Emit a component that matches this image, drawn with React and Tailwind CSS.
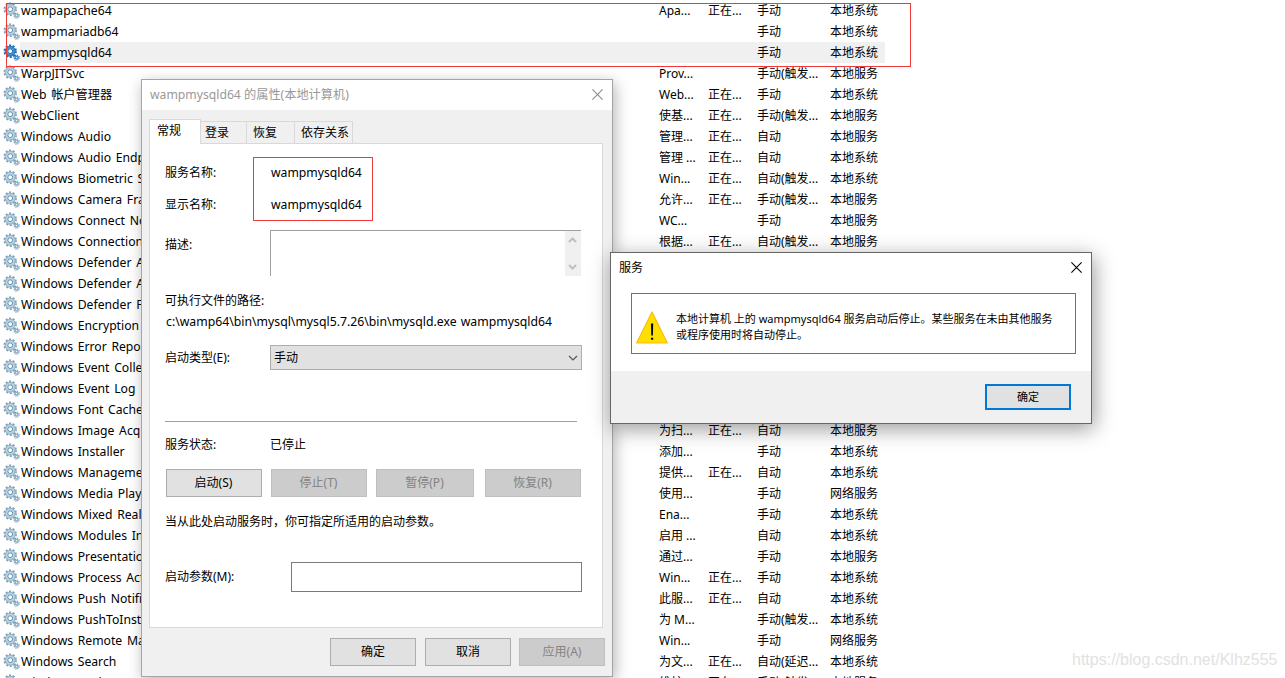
const SERVICES = [
    ["wampapache64", "Apa...", "正在...", "手动", "本地系统"],
    ["wampmariadb64", "", "", "手动", "本地系统"],
    ["wampmysqld64", "", "", "手动", "本地系统"],
    ["WarpJITSvc", "Prov...", "", "手动(触发...", "本地服务"],
    ["Web 帐户管理器", "Web...", "正在...", "手动", "本地系统"],
    ["WebClient", "使基...", "正在...", "手动(触发...", "本地服务"],
    ["Windows Audio", "管理...", "正在...", "自动", "本地服务"],
    ["Windows Audio Endp", "管理 ...", "正在...", "自动", "本地系统"],
    ["Windows Biometric S", "Win...", "正在...", "自动(触发...", "本地系统"],
    ["Windows Camera Fra", "允许...", "正在...", "手动(触发...", "本地服务"],
    ["Windows Connect No", "WC...", "", "手动", "本地服务"],
    ["Windows Connection", "根据...", "正在...", "自动(触发...", "本地服务"],
    ["Windows Defender A"],
    ["Windows Defender A"],
    ["Windows Defender F"],
    ["Windows Encryption"],
    ["Windows Error Repo"],
    ["Windows Event Colle"],
    ["Windows Event Log"],
    ["Windows Font Cache"],
    ["Windows Image Acq", "为扫...", "正在...", "自动", "本地服务"],
    ["Windows Installer", "添加...", "", "手动", "本地系统"],
    ["Windows Manageme", "提供...", "正在...", "自动", "本地系统"],
    ["Windows Media Play", "使用...", "", "手动", "网络服务"],
    ["Windows Mixed Real", "Ena...", "", "手动", "本地系统"],
    ["Windows Modules In", "启用 ...", "", "自动", "本地系统"],
    ["Windows Presentatio", "通过...", "", "手动", "本地服务"],
    ["Windows Process Act", "Win...", "正在...", "手动", "本地系统"],
    ["Windows Push Notifi", "此服...", "正在...", "自动", "本地系统"],
    ["Windows PushToInst", "为 M...", "", "手动(触发...", "本地系统"],
    ["Windows Remote Ma", "Win...", "", "手动", "网络服务"],
    ["Windows Search", "为文...", "正在...", "自动(延迟...", "本地系统"],
    ["Windows Update", "维护...", "正在...", "手动(触发...", "本地服务"],
];

const SELECTED = 2;

const GearIcon = ({ selected }) => (
    <svg width="17" height="17" viewBox="0 0 17 17" fill="none" className="shrink-0">
        <circle cx="7.2" cy="7.2" r="5.7" stroke={selected ? "#1c6fb5" : "#7f9db2"} strokeWidth="2" strokeDasharray="2 1.58" />
        <circle cx="7.2" cy="7.2" r="3.9" stroke={selected ? "#3a93d6" : "#b4d3e6"} strokeWidth="2.6" />
        <circle cx="7.2" cy="7.2" r="5" stroke={selected ? "#1b6cb0" : "#86a8bf"} strokeWidth="0.8" />
        <circle cx="7.2" cy="7.2" r="2.4" fill="#fff" stroke={selected ? "#12609f" : "#6488a0"} strokeWidth="1" />
        <circle cx="13.6" cy="13.6" r="2.5" stroke={selected ? "#1c6fb5" : "#7f9db2"} strokeWidth="1.3" strokeDasharray="1.1 0.86" />
        <circle cx="13.6" cy="13.6" r="1.4" fill="#fff" stroke={selected ? "#3a93d6" : "#8fb2c8"} strokeWidth="1.4" />
    </svg>
);

const CloseIcon = ({ color }) => (
    <svg width="11" height="11" viewBox="0 0 11 11" stroke={color} strokeWidth="1.1" className="mb-[2px]">
        <path d="M0.4 0.4 L10.6 10.6 M10.6 0.4 L0.4 10.6" />
    </svg>
);

const WarningIcon = () => (
    <svg width="32" height="33" viewBox="0 0 32 33" className="shrink-0">
        <path d="M16 1 L31.3 32 H0.7 Z" fill="#fde000" stroke="#fdb913" strokeWidth="1.2" strokeLinejoin="round" />
        <path d="M15 12.5 h2.2 l-0.3 12 h-1.6 Z M15 26.8 h2.2 v2 h-2.2 Z" fill="#000" />
    </svg>
);

const Button = ({ children, className, disabled }) => (
    <button
        className={`flex h-7 items-center justify-center border ${
            disabled ? "border-[#bfbfbf] bg-[#ccc] text-[#838383]" : "border-[#adadad] bg-[#e1e1e1]"
        } ${className}`}
    >
        {children}
    </button>
);

const ServiceRow = ({ service, selected }) => {
    const [name, description, status, startup, account] = service;
    return (
        <div className="flex h-[21px] items-center pl-[3px]">
            <GearIcon selected={selected} />
            <div className={`flex h-full w-[865px] items-center pl-px ${selected ? "bg-[#f0f0f0]" : ""}`}>
                <span className="w-[638px] pt-px text-[12.2px] leading-[18px] [word-spacing:1.5px]">{name}</span>
                <span className="w-[49px]">{description}</span>
                <span className="w-[49px]">{status}</span>
                <span className="w-[73px]">{startup}</span>
                <span>{account}</span>
            </div>
        </div>
    );
};

const PropertiesDialog = () => (
    <div className="absolute left-[141px] top-[79px] h-[598px] w-[472px] border border-[#a5a5a5] bg-[#f0f0f0] shadow-[2px_4px_14px_rgba(0,0,0,0.3)]">
        <div className="flex h-[30px] items-center justify-between bg-white pl-2 pr-[9px] text-[#999]">
            <span className="text-[12.2px]">wampmysqld64 的属性(本地计算机)</span>
            <CloseIcon color="#8c8c8c" />
        </div>
        <div className="flex h-[34px] items-end pl-[7px]">
            <div className="z-10 h-[25px] w-[52px] border border-b-0 border-[#d9d9d9] bg-white pl-[7px] leading-[21px]">常规</div>
            <div className="h-[23px] w-[46px] border-r border-t border-[#d9d9d9] pl-1 leading-[21px]">登录</div>
            <div className="h-[23px] w-12 border-r border-t border-[#d9d9d9] pl-1.5 leading-[21px]">恢复</div>
            <div className="h-[23px] w-[58px] border-r border-t border-[#d9d9d9] pl-1.5 leading-[21px]">依存关系</div>
        </div>
        <div className="-mt-px ml-[7px] h-[485px] w-[454px] border border-[#d9d9d9] bg-white pl-[15px] pt-[13px]">
            <div className="flex h-16">
                <div className="w-[88px] leading-8">
                    <div>服务名称:</div>
                    <div>显示名称:</div>
                </div>
                <div className="w-[120px] border border-[#f03a3a] pl-[17px] text-[12.2px] leading-8">
                    <div className="-mt-px">wampmysqld64</div>
                    <div>wampmysqld64</div>
                </div>
            </div>
            <div className="mt-[9px] flex h-[46px]">
                <span className="w-[105px] leading-[30px]">描述:</span>
                <div className="flex w-[311px] justify-end border-l border-t border-[#a0a0a0]">
                    <div className="flex w-4 flex-col items-center justify-between bg-[#f0f0f0] py-[6px] pr-px">
                        <svg width="9" height="6" viewBox="0 0 9 6" fill="none" stroke="#bfbfbf" strokeWidth="2">
                            <path d="M1 5 L4.5 1.5 L8 5" />
                        </svg>
                        <svg width="9" height="6" viewBox="0 0 9 6" fill="none" stroke="#bfbfbf" strokeWidth="2">
                            <path d="M1 1 L4.5 4.5 L8 1" />
                        </svg>
                    </div>
                </div>
            </div>
            <div className="mt-[17px] leading-4">可执行文件的路径:</div>
            <div className="mt-[5px] h-4 pl-px text-[12.25px] leading-4 [word-spacing:1px]">c:\wamp64\bin\mysql\mysql5.7.26\bin\mysqld.exe wampmysqld64</div>
            <div className="mt-[15px] flex h-[25px] items-center">
                <span className="w-[105px]">启动类型(E):</span>
                <div className="flex h-full w-[312px] items-center justify-between border border-[#adadad] bg-[#e1e1e1] pl-[3px] pr-[3px]">
                    <span>手动</span>
                    <svg width="10" height="6" viewBox="0 0 10 6" fill="none" stroke="#555" strokeWidth="1.2">
                        <path d="M1 1 L5 5 L9 1" />
                    </svg>
                </div>
            </div>
            <div className="mt-[51px] h-px w-[412px] bg-[#a0a0a0]" />
            <div className="mt-[15px] flex leading-4">
                <span className="w-[105px]">服务状态:</span>
                <span>已停止</span>
            </div>
            <div className="mt-4 flex pl-px">
                <Button className="w-24 pr-px">启动(S)</Button>
                <Button className="ml-[9px] w-24 pr-px" disabled>停止(T)</Button>
                <Button className="ml-[9px] w-[98px] pr-px" disabled>暂停(P)</Button>
                <Button className="ml-[11px] w-24 pr-px" disabled>恢复(R)</Button>
            </div>
            <div className="mt-[17px] leading-4">当从此处启动服务时，你可指定所适用的启动参数。</div>
            <div className="mt-8 flex h-[30px] items-center">
                <span className="w-[126px]">启动参数(M):</span>
                <div className="h-full w-[291px] border border-[#7a7a7a] bg-white" />
            </div>
        </div>
        <div className="mt-2.5 flex pl-[188px]">
            <Button className="w-[86px]">确定</Button>
            <Button className="ml-[9px] w-[86px]">取消</Button>
            <Button className="ml-2 w-[86px]" disabled>应用(A)</Button>
        </div>
    </div>
);

const AlertDialog = () => (
    <div className="absolute left-[610px] top-[252px] flex h-[172px] w-[482px] flex-col border border-[#666] bg-white shadow-[2px_5px_20px_rgba(0,0,0,0.4)]">
        <div className="flex h-[30px] items-center justify-between pl-2 pr-[9px]">
            <span>服务</span>
            <CloseIcon color="#000" />
        </div>
        <div className="ml-5 mt-2.5 flex h-[61px] w-[445px] items-center border border-[#e8403a] pl-1 text-[11px] leading-4">
            <div className="pt-2"><WarningIcon /></div>
            <div className="ml-2 whitespace-nowrap pt-[7px]">
                <div>本地计算机 上的 wampmysqld64 服务启动后停止。某些服务在未由其他服务</div>
                <div>或程序使用时将自动停止。</div>
            </div>
        </div>
        <div className="mt-[17px] flex flex-1 justify-end bg-[#f0f0f0] pr-5 pt-[13px]">
            <button className="flex h-[26px] w-[86px] items-center justify-center border-2 border-[#0078d7] bg-[#e1e1e1] text-[11px]">确定</button>
        </div>
    </div>
);

export default function App() {
    return (
        <div className="relative h-[678px] w-[1285px] overflow-hidden whitespace-nowrap bg-white font-['Noto_Sans','Noto_Sans_CJK_SC',sans-serif] text-[12px] text-black">
            {SERVICES.map((service, i) => (
                <ServiceRow key={i} service={service} selected={i === SELECTED} />
            ))}
            <div className="absolute left-1.5 top-[3px] h-16 w-[905px] border border-[#f03a3a]" />
            <PropertiesDialog />
            <AlertDialog />
            <div className="absolute left-[1072px] top-[650px] font-['Liberation_Sans',sans-serif] text-[16px] leading-5 text-[#e2e2e2]">
                https://blog.csdn.net/Klhz555
            </div>
        </div>
    );
}
